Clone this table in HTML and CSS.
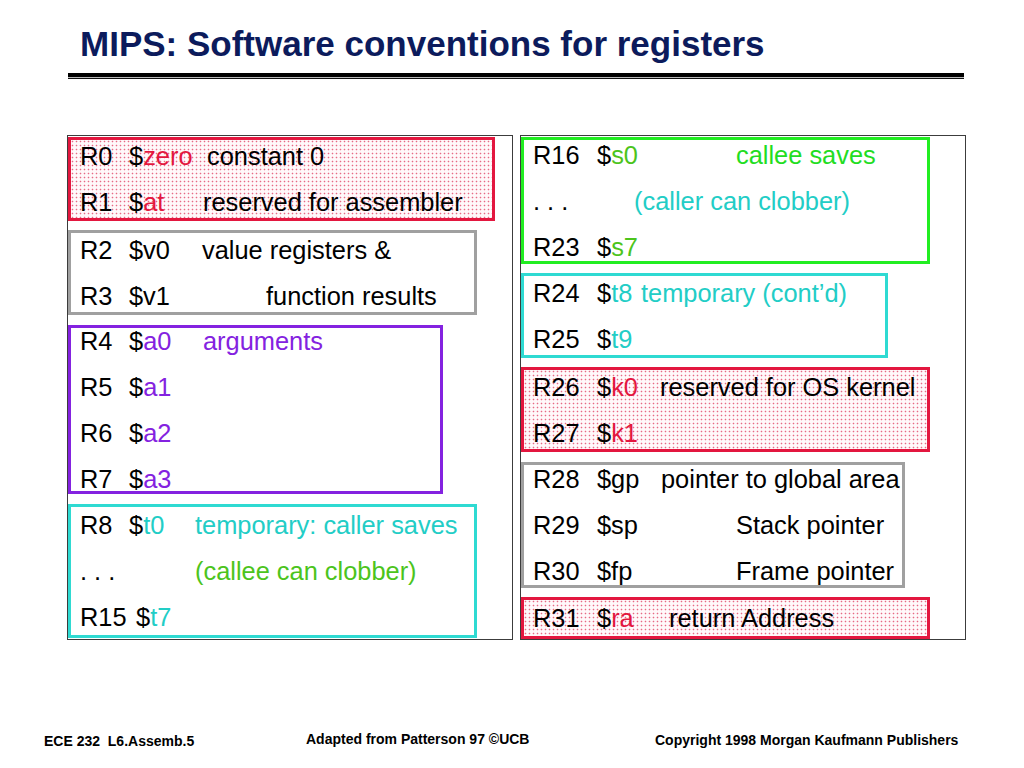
FILE: index.html
```html
<!DOCTYPE html>
<html>
<head>
<meta charset="utf-8">
<title>MIPS: Software conventions for registers</title>
<link rel="stylesheet" href="styles.css">
</head>
<body>
<div class="slide">
  <h1 class="title">MIPS: Software conventions for registers</h1>
  <div class="rule"></div>

  <div class="panels">
    <div class="panel">
      <div class="box red dotted w427 h84 mt1">
        <div class="row"><span class="c1">R0</span><span class="c2">$<span class="t-red">zero</span></span><span class="d l-p4">constant 0</span></div>
        <div class="row"><span class="c1">R1</span><span class="c2">$<span class="t-red">at</span></span><span class="d">reserved for assembler</span></div>
      </div>
      <div class="box grey w409 h85 mt9">
        <div class="row"><span class="c1">R2</span><span class="c2">$v0</span><span class="d l-m1">value registers &amp;</span></div>
        <div class="row"><span class="c1">R3</span><span class="c2">$v1</span><span class="d l-p63">function results</span></div>
      </div>
      <div class="box purple w375 h169 mt10">
        <div class="row"><span class="c1">R4</span><span class="c2">$<span class="t-purple">a0</span></span><span class="d t-purple">arguments</span></div>
        <div class="row"><span class="c1">R5</span><span class="c2">$<span class="t-purple">a1</span></span></div>
        <div class="row"><span class="c1">R6</span><span class="c2">$<span class="t-purple">a2</span></span></div>
        <div class="row"><span class="c1">R7</span><span class="c2">$<span class="t-purple">a3</span></span></div>
      </div>
      <div class="box cyan w409 h134 mt10">
        <div class="row"><span class="c1">R8</span><span class="c2">$<span class="t-cyan">t0</span></span><span class="d l-m8 t-cyan">temporary: caller saves</span></div>
        <div class="row"><span class="c1">. . .</span><span class="c2"></span><span class="d l-m8 t-lime">(callee can clobber)</span></div>
        <div class="row"><span class="c1 c1-wide">R15</span><span class="c2">$<span class="t-cyan">t7</span></span></div>
      </div>
    </div>

    <div class="panel right">
      <div class="box green w409 h127 mt1">
        <div class="row"><span class="c1">R16</span><span class="c2">$<span class="t-lime">s0</span></span><span class="d r-p76 t-green">callee saves</span></div>
        <div class="row"><span class="c1">. . .</span><span class="c2"></span><span class="d r-m26 t-cyan">(caller can clobber)</span></div>
        <div class="row"><span class="c1">R23</span><span class="c2">$<span class="t-lime">s7</span></span></div>
      </div>
      <div class="box cyan w367 h85 mt9">
        <div class="row"><span class="c1">R24</span><span class="c2">$<span class="t-cyan">t8</span></span><span class="d r-m19 t-cyan">temporary (cont’d)</span></div>
        <div class="row"><span class="c1">R25</span><span class="c2">$<span class="t-cyan">t9</span></span></div>
      </div>
      <div class="box red dotted w409 h85 mt9">
        <div class="row"><span class="c1">R26</span><span class="c2">$<span class="t-red">k0</span></span><span class="d">reserved for OS kernel</span></div>
        <div class="row"><span class="c1">R27</span><span class="c2">$<span class="t-red">k1</span></span></div>
      </div>
      <div class="box grey w384 h126 mt10">
        <div class="row"><span class="c1">R28</span><span class="c2">$gp</span><span class="d r-p1">pointer to global area</span></div>
        <div class="row"><span class="c1">R29</span><span class="c2">$sp</span><span class="d r-p76">Stack pointer</span></div>
        <div class="row"><span class="c1">R30</span><span class="c2">$fp</span><span class="d r-p76">Frame pointer</span></div>
      </div>
      <div class="box red dotted w409 h42 mt9">
        <div class="row"><span class="c1">R31</span><span class="c2">$<span class="t-red">ra</span></span><span class="d r-p9">return Address</span></div>
      </div>
    </div>
  </div>

  <div class="footer">
    <span class="f1">ECE 232&nbsp; L6.Assemb.5</span>
    <span class="f2">Adapted from Patterson 97 ©UCB</span>
    <span class="f3">Copyright 1998 Morgan Kaufmann Publishers</span>
  </div>
</div>
</body>
</html>
```

FILE: styles.css
```css
* { box-sizing: border-box; }

body {
  margin: 0;
  background: #ffffff;
  font-family: "Liberation Sans", Arial, sans-serif;
  color: #000;
}

.slide {
  width: 1024px;
  height: 768px;
  overflow: hidden;
}

.title {
  margin: 0;
  padding: 24px 0 0 80px;
  font-family: "Liberation Sans", Arial, sans-serif;
  font-weight: bold;
  font-size: 35px;
  line-height: 40px;
  color: #0c1b5c;
  white-space: nowrap;
}

.rule {
  margin: 9px 0 0 68px;
  width: 896px;
  height: 6px;
  border-top: 4px solid #000;
  border-bottom: 1px solid #111;
  background: #b8b8b8;
}

.panels {
  display: flex;
  gap: 7px;
  margin: 56px 0 0 67px;
}

.panel {
  width: 446px;
  height: 505px;
  border: 1px solid #3c3c3c;
  display: flex;
  flex-direction: column;
}

.box {
  display: flex;
  flex-direction: column;
  justify-content: center;
  border: 3px solid;
  padding-left: 9px;
  font-size: 25.4px;
  white-space: nowrap;
}

.row {
  display: flex;
  line-height: 46px;
  height: 46px;
  flex-shrink: 0;
}

.c1 { width: 49px; flex-shrink: 0; }
.c1-wide { width: 56px; }
.c2 { width: 74px; flex-shrink: 0; }
.right .c1 { width: 64px; }
.right .c2 { width: 63px; }

.red { border-color: #e3173f; }
.grey { border-color: #a0a0a0; }
.purple { border-color: #8422e0; }
.cyan { border-color: #2fdad2; }
.green { border-color: #22ee22; }

.dotted {
  background-color: #fff8fa;
  background-image: radial-gradient(circle at 1.5px 1.5px, #e66a86 0.7px, transparent 1.1px);
  background-size: 4px 4px;
}

.w427 { width: 427px; }
.w409 { width: 409px; }
.w384 { width: 384px; }
.w375 { width: 375px; }
.w367 { width: 367px; }

.h42 { height: 42px; }
.h84 { height: 84px; }
.h85 { height: 85px; }
.h126 { height: 126px; }
.h127 { height: 127px; }
.h134 { height: 134px; }
.h169 { height: 169px; }

.mt1 { margin-top: 1px; }
.mt9 { margin-top: 9px; }
.mt10 { margin-top: 10px; }

.l-p4 { margin-left: 4px; }
.l-m1 { margin-left: -1px; }
.l-p63 { margin-left: 63px; }
.l-m8 { margin-left: -8px; }
.r-p76 { margin-left: 76px; }
.r-m26 { margin-left: -26px; }
.r-m19 { margin-left: -19px; }
.r-p1 { margin-left: 1px; }
.r-p9 { margin-left: 9px; }

.t-red { color: #e3173f; }
.t-purple { color: #8422e0; }
.t-cyan { color: #22cdc6; }
.t-lime { color: #4cc41c; }
.t-green { color: #22dd22; }

.footer {
  display: flex;
  margin-top: 91px;
  padding-left: 44px;
  font-family: "Liberation Sans", Arial, sans-serif;
  font-weight: bold;
  font-size: 14px;
  line-height: 16px;
  white-space: nowrap;
}

.f1 { width: 262px; padding-top: 2px; }
.f2 { width: 349px; }
.f3 { padding-top: 1px; width: 310px; }
```
